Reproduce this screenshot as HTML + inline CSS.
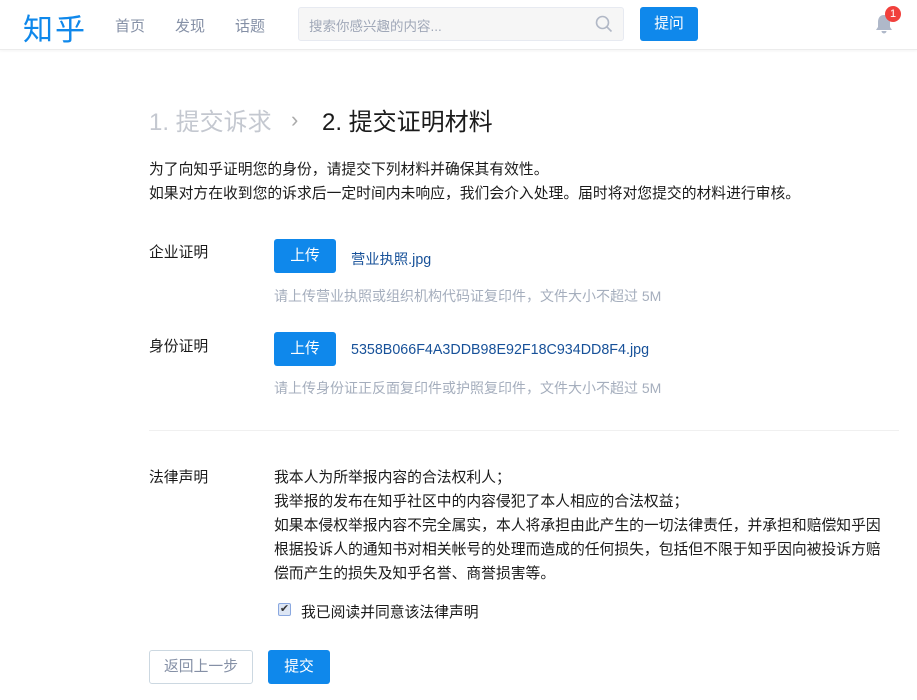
<!DOCTYPE html><html><head><meta charset="utf-8"><style>
*{margin:0;padding:0;box-sizing:border-box}
body{width:917px;height:700px;background:#fff;font-family:"Liberation Sans","Noto Sans CJK SC",sans-serif;color:#1a1a1a;position:relative;overflow:hidden;font-size:14.8px}
.a{position:absolute;white-space:nowrap}
.hdr{position:absolute;left:0;top:0;width:917px;height:50px;border-bottom:1px solid #ececec;box-shadow:0 1px 3px rgba(0,0,0,.05)}
.btn{position:absolute;background:#0f88eb;color:#fff;border-radius:3px;text-align:center;font-size:14.8px}
.g{color:#8590a6}
</style></head><body>
<div class="hdr">
<div class="a" style="left:23px;top:5px;font-size:30px;color:#0f88eb;letter-spacing:2px">知乎</div>
<div class="a g" style="left:115px;top:15px;font-size:15px">首页</div>
<div class="a g" style="left:175px;top:15px;font-size:15px">发现</div>
<div class="a g" style="left:235px;top:15px;font-size:15px">话题</div>
<div class="a" style="left:298px;top:7px;width:326px;height:34px;background:#f6f6f6;border:1px solid #e7eaf1;border-radius:3px"></div>
<div class="a" style="left:309px;top:15px;font-size:13.5px;color:#a0a8b8">搜索你感兴趣的内容...</div>
<svg class="a" style="left:595px;top:15px" width="18" height="18"><circle cx="7.5" cy="7.5" r="6" fill="none" stroke="#b1b8c6" stroke-width="1.6"/><path d="M12 12l4.5 4.5" stroke="#b1b8c6" stroke-width="1.6"/></svg>
<div class="btn" style="left:640px;top:7px;width:58px;height:34px;line-height:34px">提问</div>
<svg class="a" style="left:874px;top:13px" width="20" height="22"><path d="M10 2c-4 0-6 3-6 7v5l-2 3h16l-2-3V9c0-4-2-7-6-7zM7.5 18a2.5 2.5 0 0 0 5 0z" fill="#afb8c9"/></svg>
<div class="a" style="left:885px;top:6px;width:16px;height:16px;border-radius:8px;background:#f1403c;color:#fff;font-size:11px;line-height:16px;text-align:center">1</div>
</div>
<div class="a" style="left:149px;top:102px;font-size:24px;color:#c4c8d0">1. 提交诉求</div>
<div class="a" style="left:291px;top:107px;font-size:22px;color:#aaa">›</div>
<div class="a" style="left:322px;top:102px;font-size:24px;color:#1a1a1a">2. 提交证明材料</div>
<div class="a" style="left:149px;top:158px;line-height:24px">为了向知乎证明您的身份，请提交下列材料并确保其有效性。<br>如果对方在收到您的诉求后一定时间内未响应，我们会介入处理。届时将对您提交的材料进行审核。</div>
<div class="a" style="left:149px;top:241px">企业证明</div>
<div class="btn" style="left:274px;top:239px;width:62px;height:34px;line-height:34px">上传</div>
<div class="a" style="left:351px;top:248px;color:#175199;font-size:14.3px">营业执照.jpg</div>
<div class="a" style="left:274px;top:286px;color:#a5aebd;font-size:14px">请上传营业执照或组织机构代码证复印件，文件大小不超过 5M</div>
<div class="a" style="left:149px;top:335px">身份证明</div>
<div class="btn" style="left:274px;top:332px;width:62px;height:34px;line-height:34px">上传</div>
<div class="a" style="left:351px;top:342px;color:#175199;font-size:14.3px">5358B066F4A3DDB98E92F18C934DD8F4.jpg</div>
<div class="a" style="left:274px;top:378px;color:#a5aebd;font-size:14px">请上传身份证正反面复印件或护照复印件，文件大小不超过 5M</div>
<div class="a" style="left:149px;top:430px;width:750px;height:1px;background:#f0f0f0"></div>
<div class="a" style="left:149px;top:466px">法律声明</div>
<div class="a" style="left:274px;top:466px;line-height:24px">我本人为所举报内容的合法权利人；<br>我举报的发布在知乎社区中的内容侵犯了本人相应的合法权益；<br>如果本侵权举报内容不完全属实，本人将承担由此产生的一切法律责任，并承担和赔偿知乎因<br>根据投诉人的通知书对相关帐号的处理而造成的任何损失，包括但不限于知乎因向被投诉方赔<br>偿而产生的损失及知乎名誉、商誉损害等。</div>
<div class="a" style="left:278px;top:603px;width:13px;height:13px;border:1px solid #8aa8e0;border-radius:2px;background:#dde6f4;font-size:11px;line-height:11px;text-align:center;color:#333">✔</div>
<div class="a" style="left:301px;top:601px">我已阅读并同意该法律声明</div>
<div class="a" style="left:149px;top:650px;width:104px;height:34px;border:1px solid #ccd8e1;border-radius:3px;color:#8590a6;text-align:center;line-height:32px">返回上一步</div>
<div class="btn" style="left:268px;top:650px;width:62px;height:34px;line-height:34px">提交</div>
</body></html>
